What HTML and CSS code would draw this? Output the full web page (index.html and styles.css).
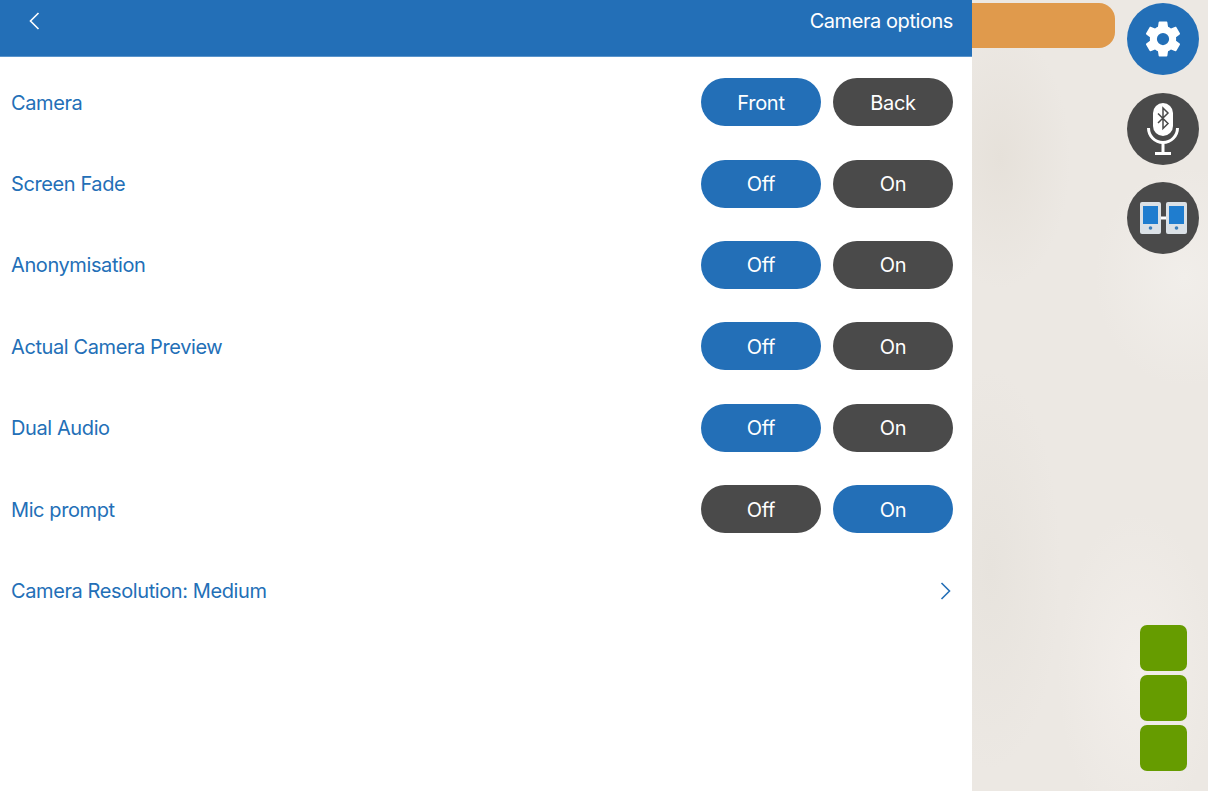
FILE: index.html
```html
<!DOCTYPE html>
<html lang="en">
<head>
<meta charset="utf-8">
<title>Camera options</title>
<link rel="stylesheet" href="styles.css">
</head>
<body>
<div class="app">
  <main class="panel">
    <header class="topbar">
      <svg class="back" viewBox="0 0 12 20" width="12" height="20"><path d="M10.500 2 2.500 10l8 8" fill="none" stroke="#fff" stroke-width="1.6"/></svg>
      <h1 class="title">Camera options</h1>
    </header>
    <div class="list">
      <div class="row"><span class="label">Camera</span><div class="pair"><span class="btn on">Front</span><span class="btn">Back</span></div></div>
      <div class="row"><span class="label">Screen Fade</span><div class="pair"><span class="btn on">Off</span><span class="btn">On</span></div></div>
      <div class="row"><span class="label">Anonymisation</span><div class="pair"><span class="btn on">Off</span><span class="btn">On</span></div></div>
      <div class="row"><span class="label">Actual Camera Preview</span><div class="pair"><span class="btn on">Off</span><span class="btn">On</span></div></div>
      <div class="row"><span class="label">Dual Audio</span><div class="pair"><span class="btn on">Off</span><span class="btn">On</span></div></div>
      <div class="row"><span class="label">Mic prompt</span><div class="pair"><span class="btn">Off</span><span class="btn on">On</span></div></div>
      <div class="row"><span class="label">Camera Resolution: Medium</span><svg class="chev" viewBox="0 0 12 20" width="12" height="20"><path d="M1.500 2l8 8-8 8" fill="none" stroke="#236fb7" stroke-width="1.6"/></svg></div>
    </div>
  </main>
  <aside class="side">
    <div class="top-row">
      <div class="orange"></div>
      <div class="circle blue">
        <svg viewBox="0 0 24 24" width="42" height="42"><path fill="#fff" fill-rule="evenodd" d="M19.430 12.980c.04-.32.07-.64.07-.98s-.03-.66-.07-.98l2.110-1.650c.19-.15.24-.42.12-.64l-2-3.460c-.12-.22-.39-.3-.61-.22l-2.490 1c-.52-.4-1.080-.73-1.690-.98l-.38-2.650A.49.49 0 0 0 14 2h-4c-.25 0-.46.18-.49.42l-.38 2.650c-.61.25-1.170.59-1.690.98l-2.490-1c-.23-.09-.49 0-.61.22l-2 3.460c-.13.22-.07.49.12.64l2.110 1.650c-.04.32-.07.65-.07.98s.03.66.07.98l-2.110 1.650c-.19.15-.24.42-.12.64l2 3.460c.12.22.39.3.61.22l2.490-1c.52.4 1.080.73 1.690.98l.38 2.650c.03.24.24.42.49.42h4c.25 0 .46-.18.49-.42l.38-2.650c.61-.25 1.170-.59 1.690-.98l2.490 1c.23.09.49 0 .61-.22l2-3.460c.12-.22.07-.49-.12-.64l-2.110-1.650zM12 15.500A3.500 3.500 0 1 1 12 8.500a3.500 3.500 0 0 1 0 7z"/></svg>
      </div>
    </div>
    <div class="circle dark mid">
      <svg viewBox="0 0 32 52" width="32" height="52">
        <rect x="6" y="0" width="20" height="33" rx="10" fill="#fff"/>
        <path d="M1.500 25a14.500 14.500 0 0 0 29 0" fill="none" stroke="#fff" stroke-width="3"/>
        <path d="M16 40v10" stroke="#fff" stroke-width="3"/>
        <path d="M8 50.500h16" stroke="#fff" stroke-width="3"/>
        <path d="M11 10.500l10 10-5 5V5l5 5-10 10" fill="none" stroke="#4a4a4a" stroke-width="1.500"/>
      </svg>
    </div>
    <div class="circle dark mid">
      <svg viewBox="0 0 47 32" width="47" height="32">
        <rect x="0" y="0" width="21" height="32" rx="2" fill="#dbe1e6"/>
        <rect x="26" y="0" width="21" height="32" rx="2" fill="#dbe1e6"/>
        <rect x="3" y="4" width="15" height="18" fill="#1f7dcf"/>
        <rect x="29" y="4" width="15" height="18" fill="#1f7dcf"/>
        <circle cx="10.500" cy="26" r="1.800" fill="#3b7fbb"/>
        <circle cx="36.500" cy="26" r="1.800" fill="#3b7fbb"/>
        <path d="M21 16h5" stroke="#fff" stroke-width="3"/>
      </svg>
    </div>
    <div class="greens">
      <div class="green"></div>
      <div class="green"></div>
      <div class="green"></div>
    </div>
  </aside>
</div>
</body>
</html>
```

FILE: styles.css
```css
* { box-sizing: border-box; }
html, body { margin: 0; height: 100%; overflow: hidden; }
body { font-family: Inter, "Liberation Sans", sans-serif; }
.app { display: flex; width: 1208px; height: 791px; }
.panel { width: 972px; background: #fff; flex: none; }
.topbar {
  height: 57px;
  background: #236fb7;
  display: flex;
  align-items: center;
  justify-content: space-between;
  padding: 0 19px 15px 28px;
  border-bottom: 1px solid #5a94cb;
}
.title { margin: 0; font-size: 20px; font-weight: 400; color: #fff; letter-spacing: -0.43px; }
.list { padding-top: 4.375px; }
.row {
  height: 81.45px;
  display: flex;
  align-items: center;
  justify-content: space-between;
  padding: 0 19px 0 11px;
}
.label { padding-top: 1px; font-size: 20px; color: #236fb7; letter-spacing: -0.4px; }
.pair { display: flex; gap: 12px; }
.btn {
  width: 120px;
  height: 48px;
  padding-top: 1px;
  border-radius: 24px;
  background: #4a4a4a;
  color: #fff;
  font-size: 20px;
  letter-spacing: -0.3px;
  display: flex;
  align-items: center;
  justify-content: center;
}
.btn.on { background: #236fb7; }
.chev { margin-right: 1px; }
.side {
  flex: 1;
  display: flex;
  flex-direction: column;
  align-items: flex-end;
  padding: 3px 9px 20px 0;
  background:
    radial-gradient(ellipse 90px 110px at 90% 35%, #f1eeea 0, transparent 100%),
    radial-gradient(ellipse 70px 130px at 12% 20%, #e6e1da 0, transparent 100%),
    radial-gradient(ellipse 70px 200px at 8% 72%, #e7e3dd 0, transparent 100%),
    radial-gradient(ellipse 80px 160px at 70% 85%, #f2eeea 0, transparent 100%),
    #ece8e3;
}
.top-row { display: flex; justify-content: space-between; align-items: flex-start; width: 100%; }
.orange {
  width: 143px;
  height: 45px;
  background: #e09a4c;
  border-radius: 0 16px 16px 0;
}
.circle {
  width: 72px;
  height: 72px;
  border-radius: 50%;
  display: flex;
  align-items: center;
  justify-content: center;
  flex: none;
}
.blue { background: #236fb7; }
.dark { background: #4a4a4a; }
.mid { margin-top: 17.5px; }
.greens {
  margin-top: auto;
  margin-right: 12px;
  display: flex;
  flex-direction: column;
  gap: 4px;
}
.green {
  width: 47px;
  height: 46px;
  background: #669c00;
  border-radius: 7px;
}
```
